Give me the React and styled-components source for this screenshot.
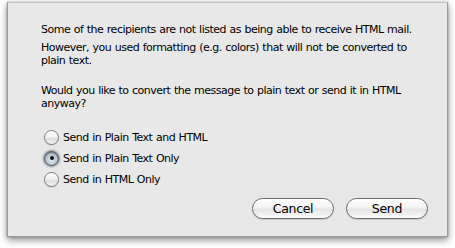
import React from "react";
import styled, { createGlobalStyle } from "styled-components";

const Global = createGlobalStyle`
  html, body { margin: 0; padding: 0; background: #ffffff; }
  body { font-family: "DejaVu Sans", "Liberation Sans", sans-serif; }
`;

const Page = styled.div`
  width: 455px;
  height: 248px;
  padding: 2px 7px 0 7px;
  box-sizing: border-box;
`;

const Panel = styled.div`
  width: 441px;
  height: 235px;
  box-sizing: border-box;
  background: #e8e8e8;
  border: 1px solid #9a9a9a;
  border-top-color: #c4c4c4;
  box-shadow: 0 3px 7px rgba(0, 0, 0, 0.45), 0 0 2px rgba(0, 0, 0, 0.25);
  padding: 20px 19px 0 33px;
  display: flex;
  flex-direction: column;
`;

const Para = styled.p`
  margin: 0 0 ${(p) => p.$gap}px 0;
  font-size: 11px;
  line-height: 13px;
  color: #000;
  letter-spacing: -0.5px;
  word-spacing: 0.5px;
`;

const Options = styled.div`
  display: flex;
  flex-direction: column;
  gap: 5px;
  margin-top: 6px;
  padding-left: 3px;
`;

const OptionRow = styled.label`
  display: flex;
  align-items: center;
  gap: 4px;
  height: 16px;
  font-size: 11px;
  color: #000;
  letter-spacing: -0.5px;
  word-spacing: 0.5px;
`;

const Radio = styled.span`
  width: 15px;
  height: 15px;
  border-radius: 50%;
  box-sizing: border-box;
  border: 1px solid ${(p) => (p.$on ? "#4a5560" : "#7c7c7c")};
  background: ${(p) =>
    p.$on
      ? "radial-gradient(circle at 50% 60%, #e9eef3 0%, #b7c2cd 55%, #6d7b89 100%)"
      : "linear-gradient(#fdfdfd 0%, #f2f2f2 45%, #dedede 60%, #f4f4f4 100%)"};
  box-shadow: ${(p) =>
    p.$on
      ? "0 0 2px 1px rgba(60,75,95,0.55), inset 0 1px 1px rgba(0,0,0,0.25)"
      : "inset 0 1px 1px rgba(255,255,255,0.8), 0 1px 1px rgba(0,0,0,0.1)"};
  display: flex;
  align-items: center;
  justify-content: center;
  flex: none;
`;

const Dot = styled.span`
  width: 4px;
  height: 4px;
  border-radius: 50%;
  background: #111;
`;

const Footer = styled.div`
  margin-top: auto;
  margin-bottom: 17px;
  display: flex;
  justify-content: flex-end;
  gap: 12px;
`;

const Button = styled.button`
  width: 82px;
  height: 21px;
  border-radius: 11px;
  border: 1px solid #6b6b6b;
  background: linear-gradient(#ffffff 0%, #f6f6f6 40%, #e6e6e6 55%, #f3f3f3 85%, #ffffff 100%);
  box-shadow: 0 1px 1px rgba(0, 0, 0, 0.15);
  font-family: "DejaVu Sans", "Liberation Sans", sans-serif;
  font-size: 12.5px;
  letter-spacing: -0.3px;
  color: #000;
  padding: 0;
  line-height: 19px;
`;

export default function App() {
  return (
    <Page>
      <Global />
      <Panel>
        <Para $gap={5}>
          Some of the recipients are not listed as being able to receive HTML mail.
        </Para>
        <Para $gap={17}>
          However, you used formatting (e.g. colors) that will not be converted to plain text.
        </Para>
        <Para $gap={13}>
          Would you like to convert the message to plain text or send it in HTML anyway?
        </Para>
        <Options>
          <OptionRow>
            <Radio />
            Send in Plain Text and HTML
          </OptionRow>
          <OptionRow>
            <Radio $on>
              <Dot />
            </Radio>
            Send in Plain Text Only
          </OptionRow>
          <OptionRow>
            <Radio />
            Send in HTML Only
          </OptionRow>
        </Options>
        <Footer>
          <Button>Cancel</Button>
          <Button>Send</Button>
        </Footer>
      </Panel>
    </Page>
  );
}
